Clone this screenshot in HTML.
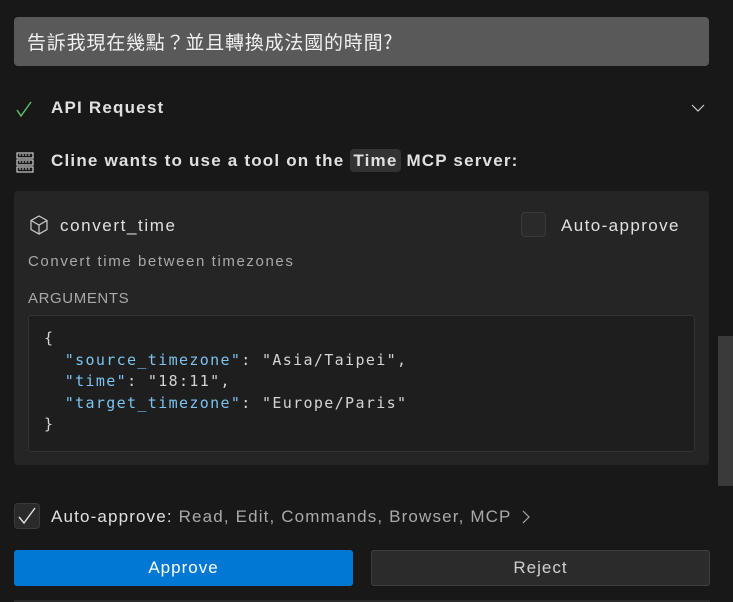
<!DOCTYPE html>
<html><head><meta charset="utf-8"><style>
*{box-sizing:border-box;margin:0;padding:0}
body{width:733px;height:602px;background:#181818;overflow:hidden;position:relative;font-family:"Liberation Sans","Noto Sans CJK TC",sans-serif;color:#e6e6e6}
.a{position:absolute}
.mono{font-family:"DejaVu Sans Mono","Liberation Mono",monospace;font-size:15px;letter-spacing:1.35px;white-space:pre;color:#d4d4d4}
.k{color:#7cc3ef}
</style></head><body>
<div class="a" style="left:14px;top:17px;width:695px;height:49px;background:#595959;border-radius:4px"></div>
<div class="a" style="left:27px;top:30px;font-size:19px;letter-spacing:0.8px;color:#f0f0f0;font-family:'Noto Sans CJK TC',sans-serif;line-height:24px;white-space:nowrap">告訴我現在幾點？並且轉換成法國的時間?</div>

<svg class="a" style="left:15px;top:100px" width="18" height="18" viewBox="0 0 18 18"><path d="M2 10l4 6L16 2" fill="none" stroke="#5fc46b" stroke-width="1.4"/></svg>
<div class="a" style="left:51px;top:97px;font-size:17px;letter-spacing:1.2px;font-weight:bold;line-height:22px;color:#e0e0e0">API Request</div>
<svg class="a" style="left:690px;top:102px" width="16" height="12" viewBox="0 0 16 12"><path d="M2 3l6 6 6-6" fill="none" stroke="#ccc" stroke-width="1.2"/></svg>

<svg class="a" style="left:16px;top:152px" width="18" height="21" viewBox="0 0 18 21"><g fill="none" stroke="#ccc" stroke-width="1.2"><rect x="1" y="1" width="16" height="5"/><rect x="1" y="8" width="16" height="5"/><rect x="1" y="15" width="16" height="5"/></g><g stroke="#ccc" stroke-width="1"><path d="M4 2v2M7 2v2M10 2v2M13 2v2M4 9v2M7 9v2M10 9v2M13 9v2M4 16v2M7 16v2M10 16v2M13 16v2"/></g></svg>
<div class="a" style="left:51px;top:150px;font-size:17px;letter-spacing:1.2px;font-weight:bold;line-height:22px;color:#e0e0e0;white-space:nowrap">Cline wants to use a tool on the <span style="background:#333;border-radius:4px;padding:2px 3px">Time</span> MCP server:</div>

<div class="a" style="left:14px;top:191px;width:695px;height:274px;background:#252525;border-radius:4px"></div>
<svg class="a" style="left:30px;top:215px" width="18" height="20" viewBox="0 0 18 20"><g fill="none" stroke="#ccc" stroke-width="1.2"><path d="M9 1L17 5.5V14.5L9 19L1 14.5V5.5Z"/><path d="M1 5.5L9 10L17 5.5M9 10V19"/></g></svg>
<div class="a" style="left:60px;top:215px;font-size:17px;letter-spacing:1.6px;line-height:22px;color:#e0e0e0">convert_time</div>
<div class="a" style="left:521px;top:212px;width:25px;height:25px;background:#2a2a2a;border:1px solid #3a3a3a;border-radius:4px"></div>
<div class="a" style="left:561px;top:215px;font-size:17px;letter-spacing:1.4px;line-height:22px;color:#e0e0e0">Auto-approve</div>
<div class="a" style="left:28px;top:252px;font-size:15px;letter-spacing:1.6px;line-height:20px;color:#a9a9a9;white-space:nowrap">Convert time between timezones</div>
<div class="a" style="left:28px;top:289px;font-size:15px;letter-spacing:0.6px;line-height:20px;color:#a9a9a9">ARGUMENTS</div>
<div class="a" style="left:28px;top:315px;width:667px;height:137px;background:#1e1e1e;border:1px solid #333;border-radius:3px"></div>
<div class="a mono" style="left:44px;top:328px;line-height:21.5px">{
  <span class="k">"source_timezone"</span>: "Asia/Taipei",
  <span class="k">"time"</span>: "18:11",
  <span class="k">"target_timezone"</span>: "Europe/Paris"
}</div>

<div class="a" style="left:718px;top:336px;width:15px;height:150px;background:#3a3a3a"></div>

<div class="a" style="left:14px;top:503px;width:26px;height:26px;background:#2a2a2a;border:1px solid #3a3a3a;border-radius:4px"></div>
<svg class="a" style="left:17px;top:506px" width="20" height="20" viewBox="0 0 20 20"><path d="M2 11l5 6L18 2" fill="none" stroke="#e0e0e0" stroke-width="1.4"/></svg>
<div class="a" style="left:51px;top:506px;font-size:17px;letter-spacing:1.15px;line-height:22px;color:#e0e0e0;white-space:nowrap">Auto-approve: <span style="color:#a9a9a9">Read, Edit, Commands, Browser, MCP</span></div>
<svg class="a" style="left:520px;top:508px" width="12" height="18" viewBox="0 0 12 18"><path d="M3 3l6 6-6 6" fill="none" stroke="#aaa" stroke-width="1.2"/></svg>

<div class="a" style="left:14px;top:550px;width:339px;height:36px;background:#0078d4;border-radius:3px;color:#fff;font-size:17px;letter-spacing:1px;text-align:center;line-height:36px">Approve</div>
<div class="a" style="left:371px;top:550px;width:339px;height:36px;background:#2b2b2b;border:1px solid #3e3e3e;border-radius:3px;color:#d0d0d0;font-size:17px;letter-spacing:1px;text-align:center;line-height:34px">Reject</div>
<div class="a" style="left:14px;top:600px;width:696px;height:2px;background:#2a2a2a"></div>
</body></html>
